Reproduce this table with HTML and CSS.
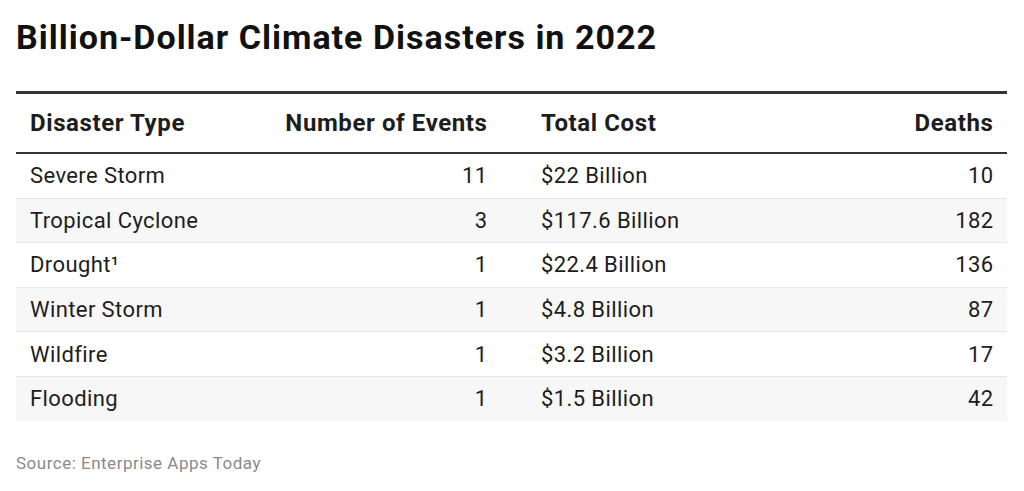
FILE: index.html
```html
<!DOCTYPE html>
<html lang="en">
<head>
<meta charset="utf-8">
<title>Billion-Dollar Climate Disasters in 2022</title>
<link rel="stylesheet" href="styles.css">
</head>
<body>
<div class="chart">
  <h1 class="title">Billion-Dollar Climate Disasters in 2022</h1>
  <table class="data">
    <colgroup>
      <col class="c1"><col class="c2"><col class="c3"><col class="c4">
    </colgroup>
    <thead>
      <tr>
        <th class="left">Disaster Type</th>
        <th class="right">Number of Events</th>
        <th class="left cost">Total Cost</th>
        <th class="right">Deaths</th>
      </tr>
    </thead>
    <tbody>
      <tr><td class="left">Severe Storm</td><td class="right">11</td><td class="left cost">$22 Billion</td><td class="right">10</td></tr>
      <tr class="alt"><td class="left">Tropical Cyclone</td><td class="right">3</td><td class="left cost">$117.6 Billion</td><td class="right">182</td></tr>
      <tr><td class="left">Drought¹</td><td class="right">1</td><td class="left cost">$22.4 Billion</td><td class="right">136</td></tr>
      <tr class="alt"><td class="left">Winter Storm</td><td class="right">1</td><td class="left cost">$4.8 Billion</td><td class="right">87</td></tr>
      <tr><td class="left">Wildfire</td><td class="right">1</td><td class="left cost">$3.2 Billion</td><td class="right">17</td></tr>
      <tr class="alt last"><td class="left">Flooding</td><td class="right">1</td><td class="left cost">$1.5 Billion</td><td class="right">42</td></tr>
    </tbody>
  </table>
  <p class="source">Source: Enterprise Apps Today</p>
</div>
</body>
</html>
```

FILE: styles.css
```css
html, body {
  margin: 0;
  padding: 0;
  background: #ffffff;
}
body {
  font-family: Roboto, "Liberation Sans", sans-serif;
  color: #1d1d1d;
}
.chart {
  padding: 17px 17px 0 16px;
}
.title {
  margin: 0;
  font-size: 34px;
  letter-spacing: 1px;
  line-height: 40px;
  font-weight: 700;
  color: #111111;
}
.data {
  margin-top: 34px;
  width: 991px;
  border-collapse: collapse;
  table-layout: fixed;
}
.c1 { width: 245px; }
.c2 { width: 240px; }
.c3 { width: 299px; }
.c4 { width: 207px; }
.data thead tr {
  border-top: 3px solid #333333;
  border-bottom: 2px solid #333333;
}
.data th {
  font-size: 24px;
  letter-spacing: 0.6px;
  font-weight: 700;
  height: 58px;
  padding: 0 14px;
  color: #1d1d1d;
}
.data td {
  font-size: 22px;
  letter-spacing: 0.4px;
  font-weight: 400;
  height: 43.6px;
  padding: 0 14px;
  color: #1d1d1d;
}
.data th.right,
.data td.right {
  padding-right: 13.5px;
}
.data tbody tr {
  border-bottom: 1px solid #e6e6e6;
}
.data tbody tr.last {
  border-bottom: none;
}
.data tr.alt {
  background: #f7f7f7;
}
.left { text-align: left; }
.right { text-align: right; }
.cost { padding-left: 40px !important; }
.source {
  margin: 32px 0 0 0;
  font-size: 17px;
  letter-spacing: 0.5px;
  line-height: 20px;
  color: #8a8a8a;
}
```
